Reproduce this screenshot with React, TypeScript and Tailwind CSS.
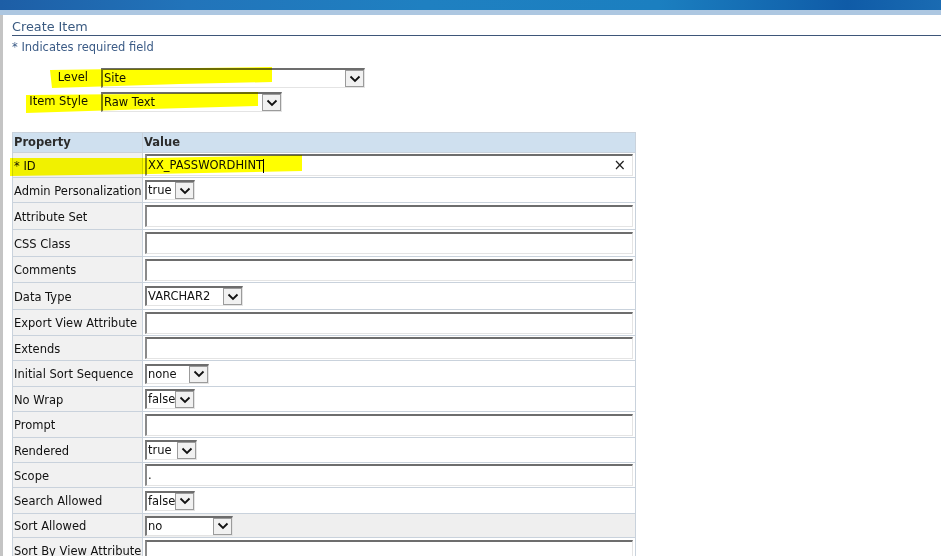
import React from "react";

type Row = {
  label: string;
  h: number;
  kind: "input" | "select";
  value?: string;
  w?: number;
  shaded?: boolean;
};

const rows: Row[] = [
  { label: "* ID", h: 25, kind: "input", value: "XX_PASSWORDHINT" },
  { label: "Admin Personalization", h: 25, kind: "select", value: "true", w: 50 },
  { label: "Attribute Set", h: 27, kind: "input" },
  { label: "CSS Class", h: 27, kind: "input" },
  { label: "Comments", h: 26, kind: "input" },
  { label: "Data Type", h: 27, kind: "select", value: "VARCHAR2", w: 98 },
  { label: "Export View Attribute", h: 26, kind: "input" },
  { label: "Extends", h: 25, kind: "input" },
  { label: "Initial Sort Sequence", h: 26, kind: "select", value: "none", w: 64 },
  { label: "No Wrap", h: 25, kind: "select", value: "false", w: 50 },
  { label: "Prompt", h: 26, kind: "input" },
  { label: "Rendered", h: 25, kind: "select", value: "true", w: 52 },
  { label: "Scope", h: 25, kind: "input", value: "." },
  { label: "Search Allowed", h: 26, kind: "select", value: "false", w: 50 },
  { label: "Sort Allowed", h: 24, kind: "select", value: "no", w: 88, shaded: true },
  { label: "Sort By View Attribute", h: 26, kind: "input" },
];

function Chevron() {
  return (
    <svg width="12" height="8" viewBox="0 0 12 8">
      <path d="M1.5 1.5 L6 6 L10.5 1.5" fill="none" stroke="#111" strokeWidth="1.8" />
    </svg>
  );
}

function Select({ value, w, h = 20 }: { value: string; w: number; h?: number }) {
  return (
    <div
      className="flex items-stretch bg-white border-t-2 border-l-2 border-r border-b border-t-[#6d6d6d] border-l-[#7a7a7a] border-r-[#e4e4e4] border-b-[#e4e4e4]"
      style={{ width: w, height: h }}
    >
      <span className="flex-1 pl-[1px] leading-[17px] text-[#111] overflow-hidden whitespace-nowrap">{value}</span>
      <span className="w-[19px] border border-[#9b9b9b] bg-[#f1f1f1] flex items-center justify-center">
        <Chevron />
      </span>
    </div>
  );
}

function TextBox({ value, caret, clear }: { value?: string; caret?: boolean; clear?: boolean }) {
  return (
    <div className="flex items-center w-[488px] h-[22px] bg-white border-t-2 border-l-2 border-r border-b border-t-[#6d6d6d] border-l-[#8a8a8a] border-r-[#e4e4e4] border-b-[#e4e4e4]">
      <span className="pl-[1px] text-[#111] whitespace-nowrap">{value}</span>
      {caret && <span className="w-px h-[14px] bg-black" />}
      <span className="flex-1" />
      {clear && <span className="pr-[6px] text-[15px] leading-none text-[#222]">×</span>}
    </div>
  );
}

export default function App() {
  return (
    <div
      className="relative w-[941px] h-[556px] overflow-hidden bg-white text-[11.5px] text-[#111]"
      style={{ fontFamily: '"DejaVu Sans", Verdana, sans-serif' }}
    >
      {/* banner */}
      <div className="h-[10px] bg-[linear-gradient(90deg,#1d5ea6_0%,#2274ba_20%,#1f80c1_45%,#1b7fc0_70%,#0f5ba7_90%,#1a6bb2_100%)]" />
      <div className="h-[5px] bg-[#adc7e1]" />

      <div className="flex h-[541px]">
        <div className="w-[3px] bg-[#c4c4c4]" />
        <div className="flex-1 pl-[9px] pt-[4px]">
          <div className="border-b border-[#3e5679] pb-[1px] text-[12.8px] leading-[15px] text-[#3a5a80]">
            Create Item
          </div>
          <div className="mt-[4px] text-[11.5px] leading-[14px] text-[#3b5b86]">* Indicates required field</div>

          {/* level / style */}
          <div className="mt-[14px] flex flex-col gap-[4px]">
            <div className="flex items-center">
              <span className="w-[77px] text-right pr-[1px]">Level</span>
              <span className="w-[12px]" />
              <Select value="Site" w={264} />
            </div>
            <div className="flex items-center">
              <span className="w-[77px] text-right pr-[1px]">Item Style</span>
              <span className="w-[12px]" />
              <Select value="Raw Text" w={181} />
            </div>
          </div>

          {/* property table */}
          <div className="mt-[20px] w-[624px] border-t border-l border-r border-[#c9d2dc]">
            <div className="flex h-[20px] border-b border-[#c9d2dc] bg-[#cfe0ef] font-bold text-[#2b2b2b]">
              <div className="w-[130px] border-r border-[#c9d2dc] pl-[1px] leading-[19px]">Property</div>
              <div className="flex-1 pl-[1px] leading-[19px]">Value</div>
            </div>
            {rows.map((r) => (
              <div
                key={r.label}
                className={`flex border-b border-[#c9d2dc] ${r.shaded ? "bg-[#efefef]" : "bg-white"}`}
                style={{ height: r.h }}
              >
                <div className="w-[130px] border-r border-[#c9d2dc] bg-[#f1f1f1] pl-[1px] pt-[3px] flex items-center whitespace-nowrap overflow-hidden">
                  {r.label}
                </div>
                <div className="flex-1 flex items-center pl-[2px]">
                  {r.kind === "input" ? (
                    <TextBox value={r.value} caret={r.label === "* ID"} clear={r.label === "* ID"} />
                  ) : (
                    <Select value={r.value ?? ""} w={r.w ?? 50} />
                  )}
                </div>
              </div>
            ))}
          </div>
        </div>
      </div>

      {/* highlighter strokes */}
      <svg
        className="absolute left-0 top-0 pointer-events-none mix-blend-multiply"
        width="941"
        height="556"
        viewBox="0 0 941 556"
      >
        <path d="M50 70 L120 69 L272 67 L272 82 L180 84 L52 88 Z" fill="#ffff00" />
        <path d="M26 95 L140 94 L258 92 L258 106 L150 109 L26 113 Z" fill="#ffff00" />
        <path d="M10 158 L150 158 L302 155 L302 171 L150 174 L10 176 Z" fill="#ffff00" />
      </svg>
    </div>
  );
}
